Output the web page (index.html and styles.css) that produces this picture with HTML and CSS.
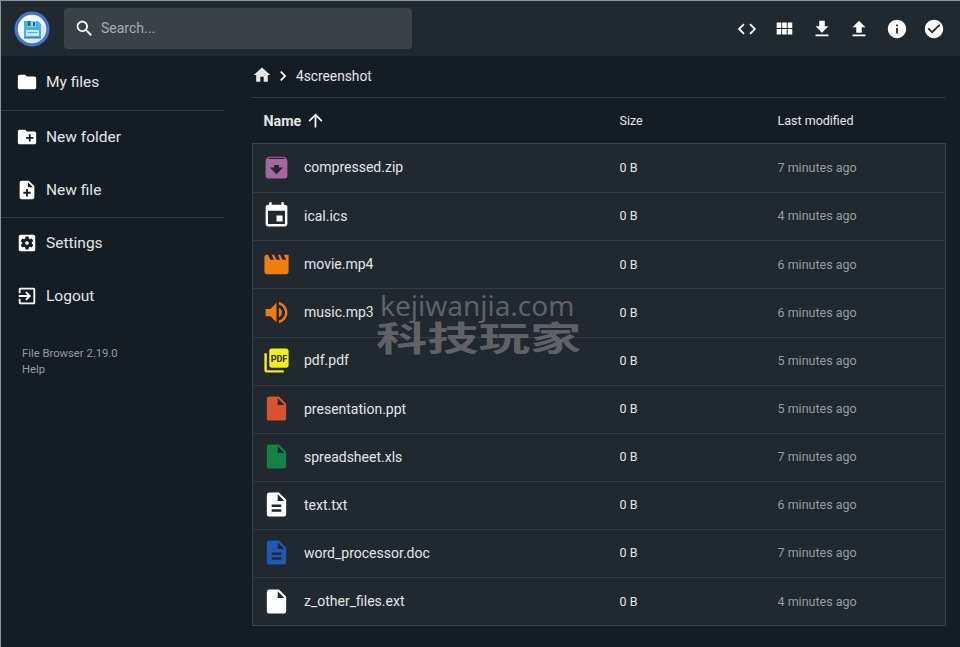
FILE: index.html
```
<!DOCTYPE html>
<html lang="en">
<head>
    <meta charset="UTF-8">
    <meta name="viewport" content="width=device-width, initial-scale=1.0">
    <title>File Browser</title>
    <link rel="stylesheet" href="styles.css">
</head>
<body>
    <svg class="sprite">
        <symbol id="folder" viewBox="0 0 24 24"><path d="M10 4H4c-1.1 0-1.99.9-1.99 2L2 18c0 1.1.9 2 2 2h16c1.1 0 2-.9 2-2V8c0-1.1-.9-2-2-2h-8l-2-2z"/></symbol>
        <symbol id="file" viewBox="0 0 24 24"><path d="M6 2c-1.1 0-1.99.9-1.99 2L4 20c0 1.1.89 2 1.99 2H18c1.1 0 2-.9 2-2V8l-6-6H6zm7 7V3.5L18.5 9H13z"/></symbol>
        <symbol id="description" viewBox="0 0 24 24"><path d="M14 2H6c-1.1 0-1.99.9-1.99 2L4 20c0 1.1.89 2 1.99 2H18c1.1 0 2-.9 2-2V8l-6-6zm2 16H8v-2h8v2zm0-4H8v-2h8v2zm-3-5V3.5L18.5 9H13z"/></symbol>
    </svg>

    <header>
        <svg class="logo" viewBox="0 0 36 36">
            <circle cx="18" cy="18" r="17.5" fill="#3f73d8"/>
            <circle cx="18" cy="18" r="14.3" fill="#f4f8fc"/>
            <path d="M27 12l4 4a14 14 0 0 1-12 16l-8-5z" fill="#dfe3e8"/>
            <path d="M10 10h14l3 3v14H10z" fill="#41b3e6"/>
            <path d="M13 10h9v6h-9z" fill="#8fd0ee"/>
            <path d="M13.500 10h3v5h-3zM19 11h2v4h-2z" fill="#24668f"/>
            <path d="M12 19h13v6H12z" fill="#c9e8f6"/>
            <path d="M13.500 21h10v1h-10z" fill="#53a9d0"/>
            <path d="M10 26h17v1.500H10z" fill="#268cc4"/>
        </svg>
        <div class="search">
            <svg viewBox="0 0 24 24"><path d="M15.5 14h-.79l-.28-.27C15.41 12.59 16 11.11 16 9.500 16 5.910 13.090 3 9.500 3S3 5.910 3 9.500 5.910 16 9.500 16c1.610 0 3.090-.59 4.230-1.570l.27.28v.79l5 4.990L20.490 19l-4.990-5zm-6 0C7.010 14 5 11.990 5 9.500S7.010 5 9.500 5 14 7.010 14 9.500 11.990 14 9.500 14z"/></svg>
            <span>Search...</span>
        </div>
        <div class="actions">
            <svg viewBox="0 0 24 24"><path d="M9.400 16.600L4.800 12l4.600-4.600L8 6l-6 6 6 6 1.400-1.400zm5.200 0l4.600-4.600-4.600-4.600L16 6l6 6-6 6-1.400-1.400z"/></svg>
            <svg viewBox="0 0 24 24"><path d="M4 11h5V5H4v6zm0 7h5v-6H4v6zm6 0h5v-6h-5v6zm6 0h5v-6h-5v6zm-6-7h5V5h-5v6zm6-6v6h5V5h-5z"/></svg>
            <svg viewBox="0 0 24 24"><path d="M19 9h-4V3H9v6H5l7 7 7-7zM5 18v2h14v-2H5z"/></svg>
            <svg viewBox="0 0 24 24"><path d="M9 16h6v-6h4l-7-7-7 7h4zm-4 2h14v2H5z"/></svg>
            <svg viewBox="0 0 24 24"><path d="M12 2C6.480 2 2 6.480 2 12s4.480 10 10 10 10-4.480 10-10S17.520 2 12 2zm1 15h-2v-6h2v6zm0-8h-2V7h2v2z"/></svg>
            <svg viewBox="0 0 24 24"><path d="M12 2C6.480 2 2 6.480 2 12s4.480 10 10 10 10-4.480 10-10S17.520 2 12 2zm-2 15l-5-5 1.410-1.410L10 14.170l7.590-7.590L19 8l-9 9z"/></svg>
        </div>
    </header>

    <div class="layout">
        <nav>
            <div class="group">
                <a class="action"><svg><use href="#folder"/></svg>My files</a>
            </div>
            <div class="group">
                <a class="action"><svg viewBox="0 0 24 24"><path d="M20 6h-8l-2-2H4c-1.110 0-1.990.89-1.990 2L2 18c0 1.110.89 2 2 2h16c1.110 0 2-.89 2-2V8c0-1.110-.89-2-2-2zm-1 8h-3v3h-2v-3h-3v-2h3V9h2v3h3v2z"/></svg>New folder</a>
                <a class="action"><svg viewBox="0 0 24 24"><path d="M14 2H6c-1.100 0-1.990.9-1.990 2L4 20c0 1.100.89 2 1.990 2H18c1.100 0 2-.9 2-2V8l-6-6zm2 14h-3v3h-2v-3H8v-2h3v-3h2v3h3v2zm-3-7V3.500L18.500 9H13z"/></svg>New file</a>
            </div>
            <div class="group">
                <a class="action"><svg viewBox="0 0 24 24"><path d="M12 10c-1.100 0-2 .9-2 2s.9 2 2 2 2-.9 2-2-.9-2-2-2zm7-7H5c-1.110 0-2 .9-2 2v14c0 1.100.89 2 2 2h14c1.110 0 2-.9 2-2V5c0-1.100-.89-2-2-2zm-1.750 9c0 .23-.02.46-.05.68l1.480 1.160c.13.11.17.3.08.45l-1.400 2.420c-.09.15-.27.21-.43.15l-1.740-.7c-.36.28-.76.51-1.180.69l-.26 1.850c-.03.17-.18.3-.35.3h-2.800c-.17 0-.32-.13-.35-.29l-.26-1.850c-.43-.18-.82-.41-1.180-.69l-1.740.7c-.16.06-.34 0-.43-.15l-1.400-2.420c-.09-.15-.05-.34.08-.45l1.480-1.160c-.03-.23-.05-.46-.05-.69 0-.23.02-.46.05-.68l-1.480-1.160c-.13-.11-.17-.3-.08-.45l1.400-2.420c.09-.15.27-.21.43-.15l1.740.7c.36-.28.76-.51 1.180-.69l.26-1.850c.03-.17.18-.3.35-.3h2.800c.17 0 .32.13.35.29l.26 1.850c.43.18.82.41 1.180.69l1.740-.7c.16-.06.34 0 .43.15l1.400 2.420c.09.15.05.34-.08.45l-1.480 1.160c.03.23.05.46.05.69z"/></svg>Settings</a>
                <a class="action"><svg viewBox="0 0 24 24"><path d="M10.090 15.590L11.500 17l5-5-5-5-1.410 1.410L12.670 11H3v2h9.670l-2.580 2.590zM19 3H5c-1.110 0-2 .9-2 2v4h2V5h14v14H5v-4H3v4c0 1.100.89 2 2 2h14c1.100 0 2-.9 2-2V5c0-1.100-.9-2-2-2z"/></svg>Logout</a>
            </div>
            <div class="credits">
                <span>File Browser 2.19.0</span>
                <span>Help</span>
            </div>
        </nav>

        <main>
            <div class="breadcrumbs">
                <svg class="home" viewBox="0 0 24 24"><path d="M10 20v-6h4v6h5v-8h3L12 3 2 12h3v8z"/></svg>
                <svg class="chevron" viewBox="0 0 24 24"><path d="M10 6L8.590 7.410 13.170 12l-4.580 4.590L10 18l6-6z"/></svg>
                <span>4screenshot</span>
            </div>

            <div class="row heading">
                <div class="name">Name <svg viewBox="0 0 24 24"><path d="M4 12l1.410 1.410L11 7.830V20h2V7.830l5.580 5.590L20 12l-8-8-8 8z"/></svg></div>
                <div>Size</div>
                <div>Last modified</div>
            </div>

            <div class="listing">
                <div class="row item">
                    <svg class="zip" viewBox="0 0 24 24"><path d="M20.540 5.230l-1.390-1.680C18.880 3.210 18.470 3 18 3H6c-.47 0-.88.21-1.160.55L3.460 5.230C3.170 5.570 3 6.020 3 6.500V19c0 1.100.9 2 2 2h14c1.100 0 2-.9 2-2V6.500c0-.48-.17-.93-.46-1.270zM12 17.500L6.500 12H10v-2h4v2h3.500L12 17.500zM5.120 5l.81-1h12l.94 1H5.120z"/></svg>
                    <div class="name">compressed.zip</div><div>0 B</div><div class="modified">7 minutes ago</div>
                </div>
                <div class="row item">
                    <svg viewBox="0 0 24 24"><path d="M17 12h-5v5h5v-5zM16 1v2H8V1H6v2H5c-1.110 0-1.990.9-1.990 2L3 19c0 1.100.89 2 2 2h14c1.100 0 2-.9 2-2V5c0-1.100-.9-2-2-2h-1V1h-2zm3 18H5V8h14v11z"/></svg>
                    <div class="name">ical.ics</div><div>0 B</div><div class="modified">4 minutes ago</div>
                </div>
                <div class="row item">
                    <svg class="media" viewBox="0 0 24 24"><path d="M18 4l2 4h-3l-2-4h-2l2 4h-3l-2-4H8l2 4H7L5 4H4c-1.100 0-1.990.9-1.990 2L2 18c0 1.100.9 2 2 2h16c1.100 0 2-.9 2-2V4h-4z"/></svg>
                    <div class="name">movie.mp4</div><div>0 B</div><div class="modified">6 minutes ago</div>
                </div>
                <div class="row item">
                    <svg class="media" viewBox="0 0 24 24"><path d="M3 9v6h4l5 5V4L7 9H3zm13.500 3c0-1.770-1.020-3.290-2.500-4.030v8.050c1.480-.73 2.500-2.250 2.500-4.020zM14 3.230v2.060c2.890.86 5 3.540 5 6.710s-2.110 5.850-5 6.710v2.060c4.010-.91 7-4.490 7-8.770s-2.990-7.860-7-8.770z"/></svg>
                    <div class="name">music.mp3</div><div>0 B</div><div class="modified">6 minutes ago</div>
                </div>
                <div class="row item">
                    <svg class="pdf" viewBox="0 0 24 24"><path d="M20 2H8c-1.100 0-2 .9-2 2v12c0 1.100.9 2 2 2h12c1.100 0 2-.9 2-2V4c0-1.100-.9-2-2-2zM4 6H2v14c0 1.100.9 2 2 2h14v-2H4V6z"/><text x="7.300" y="12.900" textLength="13.600" lengthAdjust="spacing">PDF</text></svg>
                    <div class="name">pdf.pdf</div><div>0 B</div><div class="modified">5 minutes ago</div>
                </div>
                <div class="row item">
                    <svg class="ppt"><use href="#file"/></svg>
                    <div class="name">presentation.ppt</div><div>0 B</div><div class="modified">5 minutes ago</div>
                </div>
                <div class="row item">
                    <svg class="xls"><use href="#file"/></svg>
                    <div class="name">spreadsheet.xls</div><div>0 B</div><div class="modified">7 minutes ago</div>
                </div>
                <div class="row item">
                    <svg><use href="#description"/></svg>
                    <div class="name">text.txt</div><div>0 B</div><div class="modified">6 minutes ago</div>
                </div>
                <div class="row item">
                    <svg class="doc"><use href="#description"/></svg>
                    <div class="name">word_processor.doc</div><div>0 B</div><div class="modified">7 minutes ago</div>
                </div>
                <div class="row item">
                    <svg><use href="#file"/></svg>
                    <div class="name">z_other_files.ext</div><div>0 B</div><div class="modified">4 minutes ago</div>
                </div>
            </div>
        </main>
    </div>

    <div class="watermark">
        <div class="domain">kejiwanjia.com</div>
        <div class="brand" lang="zh">科技玩家</div>
    </div>
</body>
</html>
```
FILE: styles.css
```
* {
    box-sizing: border-box;
}
body {
    margin: 0;
    height: 647px;
    overflow: hidden;
    border-top: 1px solid #87949a;
    border-left: 1px solid #87949a;
    background-color: #141d24;
    color: #e4e6e8;
    font-family: Roboto, sans-serif;
}
svg {
    display: block;
    flex: none;
    fill: #fff;
}
.sprite {
    display: none;
}
header {
    display: flex;
    align-items: center;
    height: 55px;
    padding: 0 15px 0 13px;
    background-color: #20292f;
}
.logo {
    width: 36px;
    height: 36px;
}
.search {
    display: flex;
    align-items: center;
    width: 348px;
    height: 41px;
    margin-left: 14px;
    padding-left: 10px;
    padding-bottom: 1px;
    border-radius: 4px;
    background-color: #3b4247;
    color: #a9adaf;
    font-size: 14px;
}
.search svg {
    width: 21px;
    height: 21px;
    margin-right: 6px;
}
.actions {
    display: flex;
    gap: 15.500px;
    margin-left: auto;
}
.actions svg {
    width: 22px;
    height: 22px;
}
.layout {
    display: flex;
}
nav {
    width: 223px;
}
.group + .group {
    border-top: 1px solid #30383d;
}
.group:first-child .action {
    height: 54px;
    padding-bottom: 2px;
}
.action {
    display: flex;
    align-items: center;
    gap: 8px;
    height: 52.750px;
    padding-left: 15px;
    padding-bottom: 1px;
    font-size: 15.500px;
}
.action svg {
    width: 22px;
    height: 22px;
}
.credits {
    display: flex;
    flex-direction: column;
    margin: 23px 0 0 21px;
    color: #979b9e;
    font-size: 11.250px;
    line-height: 16px;
}
main {
    width: 694px;
    margin-left: 28px;
}
.breadcrumbs {
    display: flex;
    align-items: center;
    height: 42px;
    padding-bottom: 2px;
    border-bottom: 1px solid #30383d;
    font-size: 13.750px;
}
.home {
    width: 20px;
    height: 20px;
    margin: -2px 1px 0 0;
    fill: #e4e6e8;
}
.chevron {
    width: 20px;
    height: 20px;
    margin-right: 3px;
}
.row {
    display: grid;
    align-items: center;
    font-size: 12.500px;
}
.heading {
    grid-template-columns: 356px 158px 1fr;
    height: 45px;
    padding-left: 11.500px;
}
.heading .name {
    display: flex;
    align-items: center;
    gap: 4px;
    font-size: 14.250px;
    font-weight: 700;
}
.heading svg {
    width: 21px;
    height: 21px;
}
.listing {
    border: 1px solid #3a4248;
    background-color: #20292f;
}
.item {
    grid-template-columns: 42px 315.500px 158px 1fr;
    height: 48.150px;
    padding-left: 9px;
    padding-bottom: 1.500px;
}
.item + .item {
    border-top: 1px solid #343c42;
}
.item svg {
    width: 29px;
    height: 29px;
}
.item .name {
    font-size: 14px;
}
.item .modified {
    color: #989ca0;
}
.item .zip {
    fill: #a9659f;
}
.item .media {
    fill: #f27d0c;
}
.item .pdf {
    fill: #f9ee0b;
}
.pdf text {
    fill: #20292f;
    font-size: 7.500px;
    font-weight: 700;
}
.item .ppt {
    fill: #d9532f;
}
.item .xls {
    fill: #148244;
}
.item .doc {
    fill: #2059b5;
}
.watermark {
    position: absolute;
    top: 288px;
    left: 376px;
    width: 206px;
    color: #716f76;
    opacity: 0.8;
}
.domain {
    padding-left: 4px;
    font-family: "Noto Sans", sans-serif;
    font-size: 28px;
    line-height: 34px;
}
.brand {
    font-family: "Noto Sans CJK SC", sans-serif;
    font-size: 34px;
    font-weight: 700;
    line-height: 30px;
    white-space: nowrap;
    transform: scaleX(1.510);
    transform-origin: left;
}
```
